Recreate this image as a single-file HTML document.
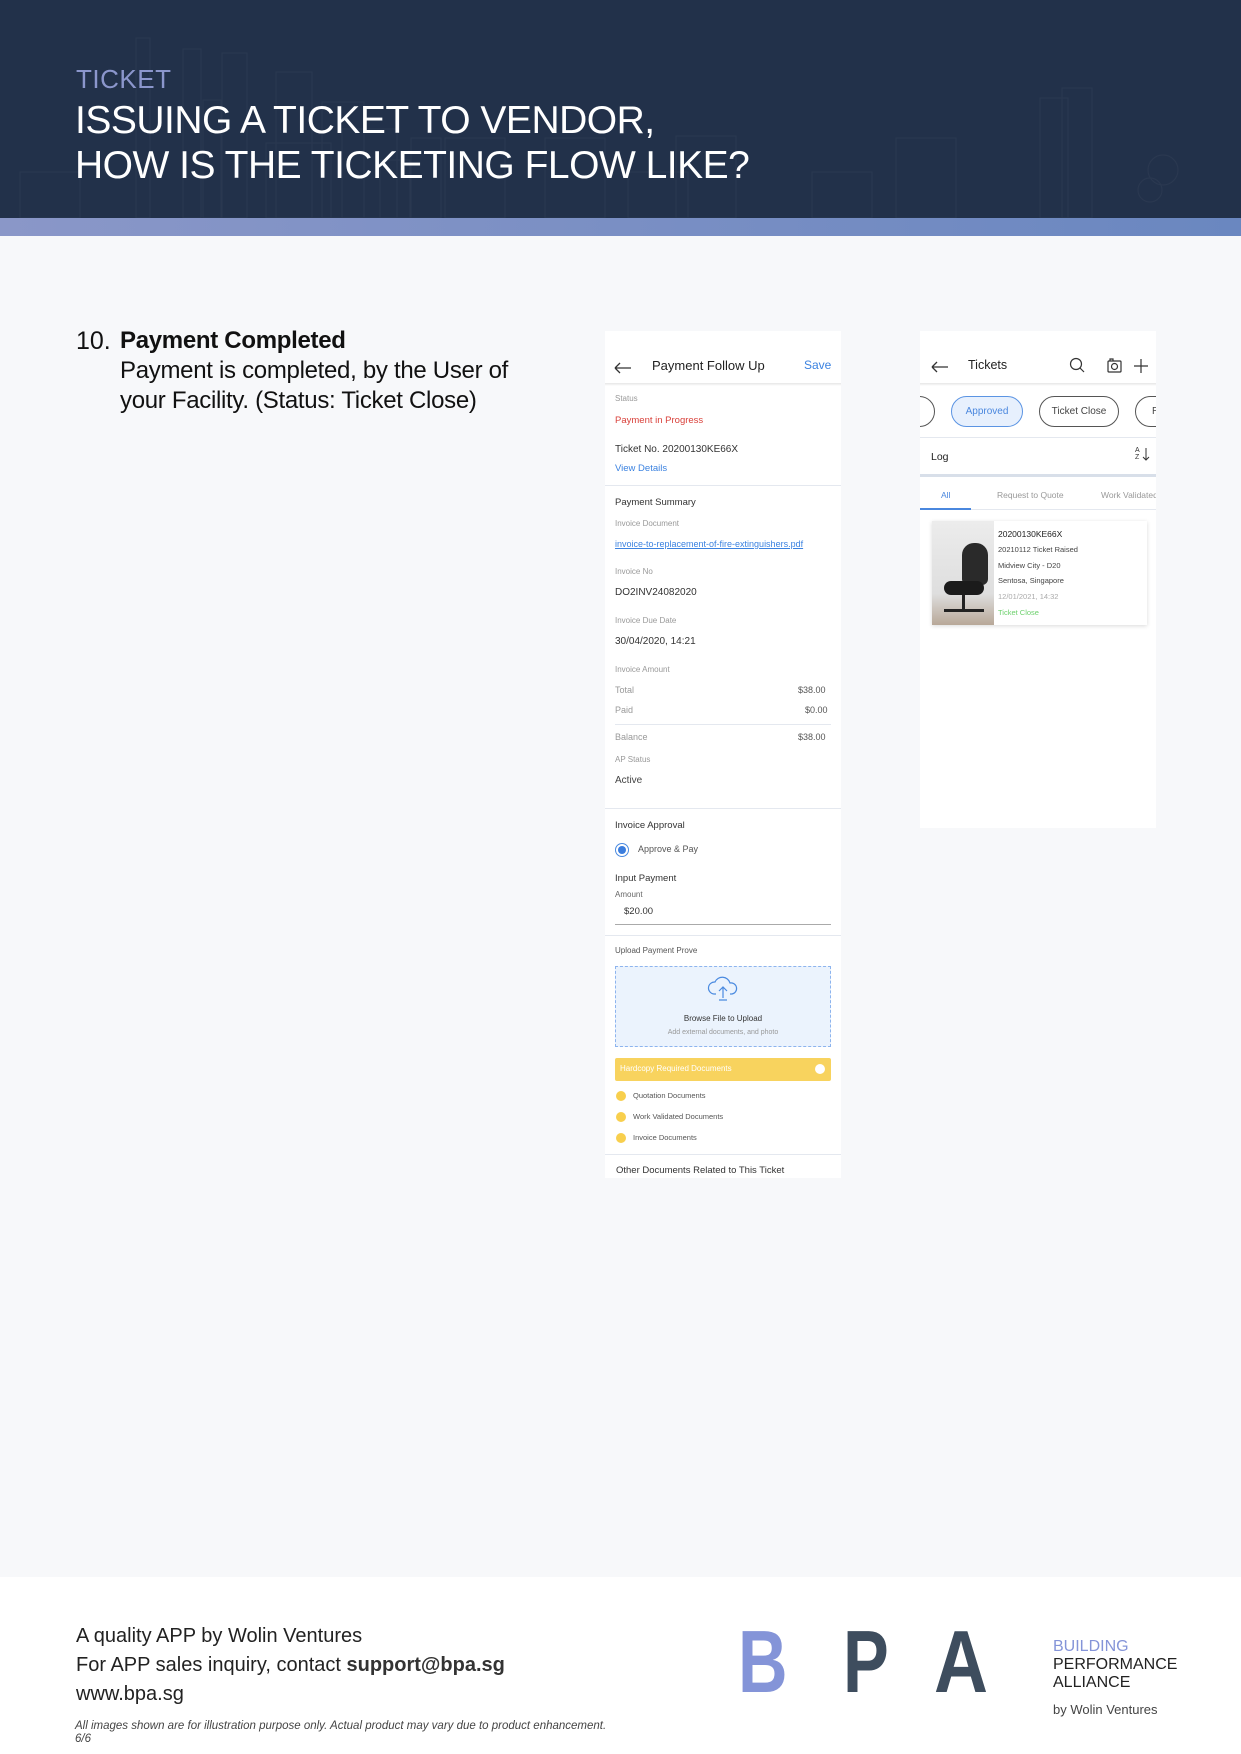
<!DOCTYPE html>
<html><head><meta charset="utf-8"><style>
*{margin:0;padding:0;box-sizing:border-box}
body{width:1241px;height:1754px;background:#fff;font-family:"Liberation Sans",sans-serif;position:relative;overflow:hidden}
.a{position:absolute;white-space:nowrap}
.hdr{position:absolute;left:0;top:0;width:1241px;height:218px;background:#22314a}
.bar{position:absolute;left:0;top:218px;width:1241px;height:18px;background:linear-gradient(90deg,#8a97c8,#6a87c0)}
.main{position:absolute;left:0;top:236px;width:1241px;height:1341px;background:#f7f8fa}
.ph{position:absolute;background:#fff}
.s{font-size:8px;color:#999}
.m{font-size:10px;color:#333}
.hl{position:absolute;left:0;right:0;height:1px;background:#e4e8ef}
.chip{position:absolute;top:396px;height:31px;border:1px solid #555;border-radius:16px;font-size:10px;color:#444;text-align:center;line-height:29px}
.dot{position:absolute;width:10px;height:10px;border-radius:5px;background:#f8cf4d}
.lg{position:absolute;top:1617px;font-size:88px;line-height:90px;font-weight:bold;transform:scaleX(0.78);transform-origin:0 0}
</style></head><body>
<div class="hdr">
<svg width="1241" height="218" style="position:absolute;left:0;top:0" fill="none" stroke="#2a3850" stroke-width="1.2">
<rect x="20" y="172" width="60" height="46"/><rect x="136" y="38" width="14" height="180"/><rect x="183" y="49" width="18" height="169"/><rect x="203" y="100" width="18" height="118"/><rect x="222" y="53" width="25" height="165"/><rect x="266" y="143" width="65" height="75"/><rect x="276" y="72" width="36" height="146"/><rect x="322" y="102" width="42" height="116"/><rect x="342" y="129" width="55" height="89"/><rect x="380" y="160" width="30" height="58"/><rect x="411" y="138" width="30" height="80"/><rect x="445" y="138" width="60" height="80"/><rect x="545" y="138" width="60" height="80"/><rect x="628" y="172" width="60" height="46"/><rect x="676" y="136" width="60" height="82"/><rect x="812" y="172" width="60" height="46"/><rect x="896" y="138" width="60" height="80"/><rect x="1040" y="98" width="28" height="120"/><rect x="1062" y="88" width="30" height="130"/><circle cx="1163" cy="170" r="15"/><circle cx="1150" cy="190" r="12"/>
</svg>
<div class="a" style="left:76px;top:64px;font-size:26px;color:#8b96cc;letter-spacing:0.5px">TICKET</div>
<div class="a" style="left:75px;top:98px;font-size:39px;line-height:45px;color:#fff;letter-spacing:-0.5px">ISSUING A TICKET TO VENDOR,<br>HOW IS THE TICKETING FLOW LIKE?</div>
</div>
<div class="bar"></div>
<div class="main"></div>

<div class="a" style="left:76px;top:326px;font-size:25px;line-height:30px;color:#111">10.</div>
<div class="a" style="left:120px;top:326px;font-size:24px;line-height:30px;color:#111;letter-spacing:-0.3px"><b>Payment Completed</b><br>Payment is completed, by the User of<br>your Facility. (Status: Ticket Close)</div>

<!-- left phone -->
<div class="ph" style="left:605px;top:331px;width:236px;height:847px"></div>
<div style="position:absolute;left:605px;top:383px;width:236px;height:3px;background:linear-gradient(#e6e6e6,#fff)"></div>
<svg class="a" style="left:614px;top:362px" width="18" height="12"><path d="M1 6H17M1 6L6 1M1 6L6 11" stroke="#333" stroke-width="1.3" fill="none"/></svg>
<div class="a" style="left:652px;top:358px;font-size:13px;color:#222">Payment Follow Up</div>
<div class="a" style="left:804px;top:358px;font-size:12px;color:#3b82e0">Save</div>
<div class="a s" style="left:615px;top:394px">Status</div>
<div class="a" style="left:615px;top:415px;font-size:9.5px;color:#d9403a">Payment in Progress</div>
<div class="a m" style="left:615px;top:444px">Ticket No. 20200130KE66X</div>
<div class="a" style="left:615px;top:463px;font-size:9.5px;color:#3b82e0">View Details</div>
<div class="hl" style="left:605px;width:236px;right:auto;top:485px"></div>
<div class="a" style="left:615px;top:497px;font-size:9.5px;color:#333">Payment Summary</div>
<div class="a s" style="left:615px;top:519px">Invoice Document</div>
<div class="a" style="left:615px;top:539px;font-size:9px;color:#3b82e0;text-decoration:underline">invoice-to-replacement-of-fire-extinguishers.pdf</div>
<div class="a s" style="left:615px;top:567px">Invoice No</div>
<div class="a m" style="left:615px;top:587px">DO2INV24082020</div>
<div class="a s" style="left:615px;top:616px">Invoice Due Date</div>
<div class="a m" style="left:615px;top:636px">30/04/2020, 14:21</div>
<div class="a s" style="left:615px;top:665px">Invoice Amount</div>
<div class="a" style="left:615px;top:685px;font-size:9px;color:#999">Total</div><div class="a" style="left:798px;top:685px;font-size:9px;color:#555">$38.00</div>
<div class="a" style="left:615px;top:705px;font-size:9px;color:#999">Paid</div><div class="a" style="left:805px;top:705px;font-size:9px;color:#555">$0.00</div>
<div style="position:absolute;left:615px;top:724px;width:216px;height:1px;background:#e4e8ef"></div>
<div class="a" style="left:615px;top:732px;font-size:9px;color:#999">Balance</div><div class="a" style="left:798px;top:732px;font-size:9px;color:#555">$38.00</div>
<div class="a s" style="left:615px;top:755px">AP Status</div>
<div class="a m" style="left:615px;top:775px;color:#444">Active</div>
<div style="position:absolute;left:605px;top:808px;width:236px;height:1px;background:#e4e8ef"></div>
<div class="a" style="left:615px;top:820px;font-size:9.5px;color:#333">Invoice Approval</div>
<div class="a" style="left:615px;top:843px;width:14px;height:14px;border-radius:7px;border:1px solid #4a8ae0;background:#fff"><div style="margin:2px;width:8px;height:8px;border-radius:4px;background:#3b7ddd"></div></div>
<div class="a" style="left:638px;top:844px;font-size:9px;color:#555">Approve &amp; Pay</div>
<div class="a" style="left:615px;top:873px;font-size:9.5px;color:#333">Input Payment</div>
<div class="a s" style="left:615px;top:890px;color:#666">Amount</div>
<div class="a" style="left:624px;top:906px;font-size:9.5px;color:#333">$20.00</div>
<div style="position:absolute;left:615px;top:924px;width:216px;height:1px;background:#aaa"></div>
<div style="position:absolute;left:605px;top:935px;width:236px;height:1px;background:#e4e8ef"></div>
<div class="a" style="left:615px;top:946px;font-size:8px;color:#555">Upload Payment Prove</div>
<div style="position:absolute;left:615px;top:966px;width:216px;height:81px;border:1px dashed #8db4ee;background:#ebf3fd"></div>
<svg class="a" style="left:707px;top:974px" width="32" height="28" fill="none" stroke="#4a8ae0" stroke-width="1.2"><path d="M9 20H7A6 6 0 0 1 8 8A8 8 0 0 1 23 9A5.5 5.5 0 0 1 25 20H23"/><path d="M16 24V13M12 17L16 13L20 17M12 26H20"/></svg>
<div class="a" style="left:615px;top:1014px;width:216px;text-align:center;font-size:8px;color:#333">Browse File to Upload</div>
<div class="a" style="left:615px;top:1029px;width:216px;text-align:center;font-size:7px;color:#999">Add external documents, and photo</div>
<div style="position:absolute;left:615px;top:1058px;width:216px;height:23px;background:#f8d35e;border-radius:2px"></div>
<div class="a" style="left:620px;top:1064px;font-size:8px;color:#fff">Hardcopy Required Documents</div>
<div class="a" style="left:815px;top:1064px;width:10px;height:10px;border-radius:5px;background:#fff"></div>
<div class="dot" style="left:616px;top:1091px"></div><div class="a" style="left:633px;top:1091px;font-size:7.5px;color:#555">Quotation Documents</div>
<div class="dot" style="left:616px;top:1112px"></div><div class="a" style="left:633px;top:1112px;font-size:7.5px;color:#555">Work Validated Documents</div>
<div class="dot" style="left:616px;top:1133px"></div><div class="a" style="left:633px;top:1133px;font-size:7.5px;color:#555">Invoice Documents</div>
<div style="position:absolute;left:605px;top:1154px;width:236px;height:1px;background:#e4e8ef"></div>
<div class="a" style="left:616px;top:1165px;font-size:9.5px;color:#333">Other Documents Related to This Ticket</div>

<!-- right phone -->
<div class="ph" style="left:920px;top:331px;width:236px;height:497px;overflow:hidden">
<div style="position:absolute;left:0;top:52px;width:236px;height:3px;background:linear-gradient(#e6e6e6,#fff)"></div>
<svg class="a" style="left:11px;top:30px" width="18" height="12"><path d="M1 6H17M1 6L6 1M1 6L6 11" stroke="#333" stroke-width="1.3" fill="none"/></svg>
<div class="a" style="left:48px;top:27px;font-size:12.5px;color:#222">Tickets</div>
<svg class="a" style="left:148px;top:26px" width="80" height="18" fill="none" stroke="#333" stroke-width="1.2"><circle cx="8" cy="7" r="5.5"/><path d="M12 11L16 15"/><rect x="40" y="4" width="13" height="11" rx="1"/><circle cx="46.5" cy="9.5" r="3"/><path d="M42 4V2H45V4"/><path d="M73 2V16M66 9H80"/></svg>
<div class="chip" style="left:-30px;width:45px;top:65px"></div>
<div class="chip" style="left:31px;width:72px;top:65px;border-color:#5b94e3;background:#e7f0fd;color:#4a87de">Approved</div>
<div class="chip" style="left:119px;width:80px;top:65px">Ticket Close</div>
<div class="chip" style="left:215px;width:60px;top:65px;text-align:left;padding-left:16px">R</div>
<div style="position:absolute;left:0;top:106px;width:236px;height:1px;background:#e4e8ef"></div>
<div class="a" style="left:11px;top:120px;font-size:10.5px;color:#222">Log</div>
<div class="a" style="left:215px;top:116px;font-size:7px;line-height:7px;color:#333">A<br>Z</div>
<svg class="a" style="left:222px;top:116px" width="8" height="15"><path d="M4 1V13M1 10L4 13L7 10" stroke="#333" fill="none"/></svg>
<div style="position:absolute;left:0;top:143px;width:236px;height:3px;background:#d8dfe9"></div>
<div class="a" style="left:21px;top:159px;font-size:8.5px;color:#4a87de">All</div>
<div class="a" style="left:77px;top:159px;font-size:8.5px;color:#999">Request to Quote</div>
<div class="a" style="left:181px;top:159px;font-size:8.5px;color:#999">Work Validated</div>
<div style="position:absolute;left:0;top:178px;width:236px;height:1px;background:#e4e8ef"></div>
<div style="position:absolute;left:0;top:177px;width:51px;height:2px;background:#4a87de"></div>
<div style="position:absolute;left:12px;top:190px;width:215px;height:104px;background:#fff;box-shadow:0 1px 4px rgba(0,0,0,.15)"></div>
<div style="position:absolute;left:12px;top:190px;width:62px;height:104px;background:linear-gradient(#ececec,#dedede 70%,#b8a898)">
<div style="position:absolute;left:30px;top:22px;width:26px;height:42px;border-radius:12px 12px 6px 6px;background:#2a2a2a"></div>
<div style="position:absolute;left:12px;top:60px;width:40px;height:14px;border-radius:7px;background:#1b1b1b"></div>
<div style="position:absolute;left:30px;top:74px;width:3px;height:16px;background:#222"></div>
<div style="position:absolute;left:12px;top:88px;width:40px;height:3px;background:#222"></div>
</div>
<div class="a" style="left:78px;top:198px;font-size:8.5px;color:#222">20200130KE66X</div>
<div class="a" style="left:78px;top:214px;font-size:7.5px;color:#444">20210112 Ticket Raised</div>
<div class="a" style="left:78px;top:230px;font-size:7.5px;color:#444">Midview City - D20</div>
<div class="a" style="left:78px;top:245px;font-size:7.5px;color:#444">Sentosa, Singapore</div>
<div class="a" style="left:78px;top:261px;font-size:7.5px;color:#aaa">12/01/2021, 14:32</div>
<div class="a" style="left:78px;top:277px;font-size:7.5px;color:#6cd06c">Ticket Close</div>
</div>

<!-- footer -->
<div class="a" style="left:76px;top:1622px;font-size:20px;line-height:29px;color:#222">A quality APP by Wolin Ventures<br>For APP sales inquiry, contact <span style="font-weight:bold;color:#333">support@bpa.sg</span><br>www.bpa.sg</div>
<div class="a" style="left:75px;top:1720px;font-size:11.5px;font-style:italic;color:#444;line-height:13px">All images shown are for illustration purpose only. Actual product may vary due to product enhancement.<br>6/6</div>
<div class="lg" style="left:738px;color:#8494d8">B</div>
<div class="lg" style="left:843px;color:#3e4d5e">P</div>
<div class="lg" style="left:934px;color:#3e4d5e;transform:scaleX(0.85)">A</div>
<div class="a" style="left:1053px;top:1638px;font-size:16px;line-height:18px;color:#222"><span style="color:#8494d8">BUILDING</span><br>PERFORMANCE<br>ALLIANCE</div>
<div class="a" style="left:1053px;top:1702px;font-size:13px;color:#444">by Wolin Ventures</div>
</body></html>
